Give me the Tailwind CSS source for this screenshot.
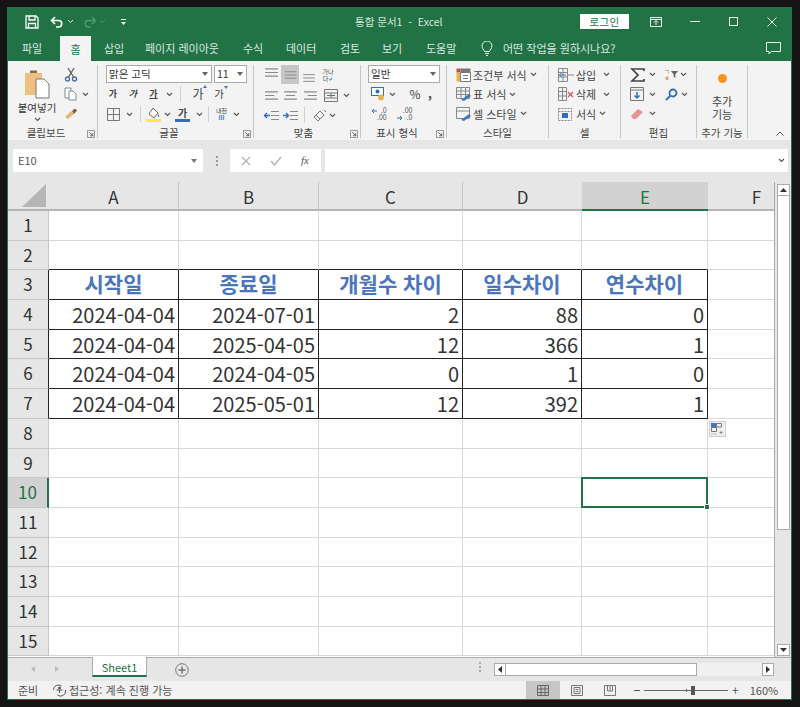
<!DOCTYPE html>
<html lang="ko">
<head>
<meta charset="UTF-8">
<title>통합 문서1 - Excel</title>
<script src="https://cdn.jsdelivr.net/npm/@tailwindcss/browser@4"></script>
</head>
<body class="w-[800px] h-[707px] overflow-hidden bg-[#141414] pt-[7px] pl-[7px] font-['Noto_Sans_CJK_KR','Liberation_Sans',sans-serif] text-[#444]">
<svg class="hidden">
  <symbol id="chev" viewBox="0 0 7 5"><path d="M1 1l2.5 2.5L6 1" stroke="#555" stroke-width="1.1" fill="none"/></symbol>
  <symbol id="launch" viewBox="0 0 9 9"><path d="M.5 8.5v-8h8v8z" fill="none" stroke="#888"/><path d="M2.5 2.5l4 4M6.5 3.5v3h-3" fill="none" stroke="#555"/></symbol>
  <symbol id="lines" viewBox="0 0 16 12"><path d="M1 2h14M1 6h14M1 10h14" stroke="#8a8a8a" stroke-width="1.2"/></symbol>
  <symbol id="left" viewBox="0 0 16 12"><path d="M1 2h14M1 6h10M1 10h14" stroke="#8a8a8a" stroke-width="1.2"/></symbol>
  <symbol id="center" viewBox="0 0 16 12"><path d="M1 2h14M3 6h10M1 10h14" stroke="#8a8a8a" stroke-width="1.2"/></symbol>
  <symbol id="right" viewBox="0 0 16 12"><path d="M1 2h14M5 6h10M1 10h14" stroke="#8a8a8a" stroke-width="1.2"/></symbol>
</svg>
<div class="w-[785px] h-[693px] flex flex-col bg-[#e6e6e6] border border-t-0 border-[#217346]">

  <!-- title bar -->
  <div class="h-[29px] bg-[#217346] flex items-center text-[#d5e6dc] shrink-0">
    <svg class="w-[14px] h-[14px] ml-[17px]" viewBox="0 0 14 14" fill="none" stroke="#fff" stroke-width="1.3"><path d="M1 1h10l2 2v10H1z"/><path d="M4 1v4h6V1M3.5 13V8.5h7V13"/></svg>
    <svg class="w-[14px] h-[12px] ml-[11px]" viewBox="0 0 14 12" fill="none" stroke="#fff" stroke-width="1.6"><path d="M5 1L1.5 4.5 5 8M2 4.5h6.5a3.2 3.2 0 0 1 0 6.5H6"/></svg>
    <svg class="w-[7px] h-[5px] ml-[3px]" viewBox="0 0 7 5"><path d="M1 1l2.5 2.5L6 1" stroke="#e8f1ec" fill="none"/></svg>
    <svg class="w-[14px] h-[12px] ml-[9px]" viewBox="0 0 14 12" fill="none" stroke="#4f9a70" stroke-width="1.5"><path d="M9 1l3.5 3.5L9 8M12 4.5H5.5a3.2 3.2 0 0 0 0 6.5H8"/></svg>
    <svg class="w-[7px] h-[5px] ml-[2px]" viewBox="0 0 7 5"><path d="M1 1l2.5 2.5L6 1" stroke="#4f9a70" fill="none"/></svg>
    <svg class="w-[7px] h-[8px] ml-[14px]" viewBox="0 0 7 8" fill="#e8f1ec"><path d="M1 1h5v1H1zM1 4h5L3.500 7z"/></svg>
    <span class="ml-[228px] text-[10.500px] w-[92px] whitespace-pre">통합 문서1  -  Excel</span>
    <span class="ml-[133px] w-[49px] h-[15px] bg-white text-[#217346] text-[10.5px] leading-[15px] text-center tracking-wide">로그인</span>
    <svg class="w-[12px] h-[10px] ml-[21px]" viewBox="0 0 12 10" fill="none" stroke="#e8f1ec"><path d="M.5.5h11v9H.5zM.5 2.500h11M6 8V4M4 5.500l2-2 2 2"/></svg>
    <span class="w-[10px] h-px bg-[#e8f1ec] ml-[28px]"></span>
    <span class="w-[9px] h-[9px] border border-[#e8f1ec] ml-[29px]"></span>
    <svg class="w-[10px] h-[10px] ml-[29px]" viewBox="0 0 10 10" stroke="#e8f1ec" fill="none"><path d="M.5.5l9 9M9.500.5l-9 9"/></svg>
  </div>

  <!-- ribbon tabs -->
  <div class="h-[25px] bg-[#217346] flex items-center text-[11px] text-[#dbe9e1] shrink-0">
    <span class="ml-[14px] w-[38px]">파일</span>
    <span class="w-[31px] h-[25px] bg-[#f3f3f3] text-[#217346] text-center leading-[26px]">홈</span>
    <span class="ml-[13px] w-[42px]">삽입</span>
    <span class="w-[98px] -ml-px">페이지 레이아웃</span>
    <span class="w-[43px]">수식</span>
    <span class="w-[54px]">데이터</span>
    <span class="w-[42px]">검토</span>
    <span class="w-[44px]">보기</span>
    <span class="w-[55px]">도움말</span>
    <svg class="w-[12px] h-[15px]" viewBox="0 0 12 15" fill="none" stroke="#e8f1ec"><path d="M3.500 10.500C3 8.500 1 7.500 1 5a5 5 0 0 1 10 0c0 2.500-2 3.500-2.500 5.500zM4 12.500h4M5 14.500h2"/></svg>
    <span class="ml-[10px] w-[263px]">어떤 작업을 원하시나요?</span>
    <svg class="w-[15px] h-[13px]" viewBox="0 0 15 13" fill="none" stroke="#e8f1ec"><path d="M.5.5h14v9H5L3 12V9.500H.5z"/></svg>
  </div>

  <!-- ribbon -->
  <div class="h-[79px] bg-[#f3f3f3] flex pt-[4px] relative text-[10.500px] shrink-0">
    <!-- clipboard -->
    <div class="w-[90px] h-[73px] border-r border-[#c8c8c8] relative flex flex-col">
      <div class="flex">
        <div class="w-[56px] flex flex-col items-center pl-[2px]">
          <svg class="w-[26px] h-[30px] mt-[4px]" viewBox="0 0 26 30"><rect x="1" y="4" width="17" height="22" fill="#eec07f"/><path d="M6 4h7V1.500H6z" fill="#8a6b4a"/><path d="M12 10h8l5 5v14H12z" fill="#fff" stroke="#777"/></svg>
          <span class="text-[10.500px] leading-[13px] text-[#333] mt-[2px] whitespace-nowrap">붙여넣기</span>
          <svg class="w-[7px] h-[5px] mt-[3px]"><use href="#chev"/></svg>
        </div>
        <div class="flex flex-col items-start">
          <div class="h-[19.500px] flex items-center"><svg class="w-[14px] h-[15px]" viewBox="0 0 14 15" fill="none" stroke="#4a6fa5" stroke-width="1.4"><circle cx="3.500" cy="12" r="2"/><circle cx="10.500" cy="12" r="2"/><path d="M4.500 10L10 1M9.500 10L4 1" stroke="#666"/></svg></div>
          <div class="h-[19.500px] flex items-center"><svg class="w-[14px] h-[14px]" viewBox="0 0 14 14" fill="#fff" stroke="#7a8a9a"><path d="M1 1h6v10H1z"/><path d="M5 4h4l3 3v6H5z"/></svg><svg class="w-[7px] h-[5px] ml-[4px]"><use href="#chev"/></svg></div>
          <div class="h-[19.500px] flex items-center"><svg class="w-[14px] h-[12px]" viewBox="0 0 14 12"><path d="M1 9l6-6 3 3-6 5z" fill="#e2b878"/><path d="M8 3l3-2.500 2 2L10 6z" fill="#7a5b3a"/></svg></div>
        </div>
      </div>
      <div class="mt-auto h-[10px] leading-[10px] text-center pr-[13px]">클립보드</div>
      <svg class="absolute right-[2px] bottom-0 w-[8px] h-[8px]"><use href="#launch"/></svg>
    </div>

    <!-- font -->
    <div class="w-[156px] h-[73px] border-r border-[#c8c8c8] relative flex flex-col">
      <div class="flex pl-[8px] gap-[2px] h-[18px]">
        <div class="w-[106px] bg-white border border-[#ababab] flex items-center justify-between px-[2px] text-[10.500px] text-[#333]">맑은 고딕<svg class="w-[6px] h-[4px] mr-[1px]" viewBox="0 0 6 4"><path d="M0 0h6L3 4z" fill="#666"/></svg></div>
        <div class="w-[33px] bg-white border border-[#ababab] flex items-center justify-between px-[2px] text-[10.500px] text-[#333]">11<svg class="w-[6px] h-[4px] mr-[1px]" viewBox="0 0 6 4"><path d="M0 0h6L3 4z" fill="#666"/></svg></div>
      </div>
      <div class="flex items-center h-[20px] mt-[1px] pl-[5px] text-[9px] font-bold text-[#444]">
        <span class="w-[20px] text-center">가</span><span class="w-[20px] text-center italic">가</span><span class="w-[21px] text-center underline">가</span>
        <svg class="w-[7px] h-[5px] ml-[2px]"><use href="#chev"/></svg>
        <span class="w-px h-[16px] bg-[#d0d0d0] ml-[7px]"></span>
        <span class="ml-[7px] w-[20px] text-center text-[12px] font-normal relative">가<i class="absolute top-0 right-[1px] w-0 h-0 border-x-[2px] border-b-[3px] border-x-transparent border-b-[#3d78c4]"></i></span>
        <span class="ml-[1px] w-[20px] text-center text-[10.500px] font-normal relative">가<i class="absolute top-0 right-[1px] w-0 h-0 border-x-[2px] border-t-[3px] border-x-transparent border-t-[#3d78c4]"></i></span>
      </div>
      <div class="flex items-center h-[20px] pl-[9px]">
        <svg class="w-[13px] h-[13px]" viewBox="0 0 13 13" fill="none" stroke="#777"><path d="M.5.5h12v12H.5zM6.500.5v12M.5 6.500h12"/></svg>
        <svg class="w-[7px] h-[5px] ml-[6px]"><use href="#chev"/></svg>
        <span class="w-px h-[16px] bg-[#d0d0d0] ml-[7px]"></span>
        <svg class="w-[15px] h-[15px] ml-[5px]" viewBox="0 0 15 15"><path d="M7 1l5 5-4 5-5-4z" fill="#fff" stroke="#666"/><path d="M12 7c1 1 1.500 2 1 3-1 0-1.500-1.500-1-3z" fill="#3d78c4"/><rect x="0" y="12" width="15" height="3" fill="#ffeb3b"/></svg>
        <svg class="w-[7px] h-[5px] ml-[3px]"><use href="#chev"/></svg>
        <div class="ml-[4px] w-[15px] h-[15px] flex flex-col items-center"><span class="text-[10px] leading-[12px] font-bold">가</span><span class="w-[15px] h-[3px] bg-[#3d6cb5]"></span></div>
        <svg class="w-[7px] h-[5px] ml-[6px]"><use href="#chev"/></svg>
        <span class="w-px h-[16px] bg-[#d0d0d0] ml-[5px]"></span>
        <div class="ml-[6px] w-[13px] flex flex-col items-center text-[6px] leading-[7px] text-[#444]"><span class="whitespace-nowrap">내천</span><span class="text-[#3d78c4] font-bold">Ⅲ</span></div>
        <svg class="w-[7px] h-[5px] ml-[5px]"><use href="#chev"/></svg>
      </div>
      <div class="mt-auto h-[10px] leading-[10px] text-center pr-[13px]">글꼴</div>
      <svg class="absolute right-[2px] bottom-0 w-[8px] h-[8px]"><use href="#launch"/></svg>
    </div>

    <!-- alignment -->
    <div class="w-[107px] h-[73px] border-r border-[#c8c8c8] relative flex flex-col">
      <div class="flex items-center h-[19px] pl-[10px]">
        <svg class="w-[15px] h-[11px] mb-[5px]"><use href="#lines"/></svg>
        <span class="ml-[2px] w-[18px] h-[19px] bg-[#c6c6c6] flex items-center justify-center"><svg class="w-[13px] h-[10px]"><use href="#lines"/></svg></span>
        <svg class="w-[14px] h-[10px] ml-[3px] mt-[6px]"><use href="#lines"/></svg>
        <div class="ml-[6px] w-[12px] text-[6px] leading-[7px] text-center"><span class="whitespace-nowrap">가나</span><br><span class="whitespace-nowrap">다<i class="not-italic text-[#3d78c4]">↲</i></span></div>
      </div>
      <div class="flex items-center h-[20px] pl-[10px] mt-px">
        <svg class="w-[15px] h-[11px]"><use href="#left"/></svg>
        <svg class="w-[15px] h-[11px] ml-[4px]"><use href="#center"/></svg>
        <svg class="w-[15px] h-[11px] ml-[5px]"><use href="#right"/></svg>
        <svg class="w-[14px] h-[13px] ml-[6px]" viewBox="0 0 14 13" fill="none" stroke="#777"><path d="M.5.5h13v12H.5zM.5 4h13M.5 9h13M7 4v2M7 7v2"/><path d="M3 6.500h8" stroke="#3d78c4"/></svg>
        <svg class="w-[7px] h-[5px] ml-[5px]"><use href="#chev"/></svg>
      </div>
      <div class="flex items-center h-[20px] pl-[10px]">
        <svg class="w-[15px] h-[11px]" viewBox="0 0 15 11" fill="none"><path d="M7 1.500h8M7 5.500h8M7 9.500h8" stroke="#8a8a8a"/><path d="M6 5.500H1M3 3L.5 5.500 3 8" stroke="#2f6fc0" stroke-width="1.300"/></svg>
        <svg class="w-[15px] h-[11px] ml-[4px]" viewBox="0 0 15 11" fill="none"><path d="M7 1.500h8M7 5.500h8M7 9.500h8" stroke="#8a8a8a"/><path d="M0 5.500h5M3 3l2.500 2.500L3 8" stroke="#2f6fc0" stroke-width="1.300"/></svg>
        <span class="w-px h-[16px] bg-[#d0d0d0] ml-[6px]"></span>
        <svg class="w-[15px] h-[14px] ml-[7px]" viewBox="0 0 15 14" fill="none" stroke="#777"><path d="M2 9l6-6 4 4-6 6zM4 7l4 4"/><path d="M12 2l2 2" stroke="#3d78c4"/></svg>
        <svg class="w-[7px] h-[5px] ml-[2px]"><use href="#chev"/></svg>
      </div>
      <div class="mt-auto h-[10px] leading-[10px] text-center pr-[7px]">맞춤</div>
      <svg class="absolute right-[2px] bottom-0 w-[8px] h-[8px]"><use href="#launch"/></svg>
    </div>

    <!-- number -->
    <div class="w-[86px] h-[73px] border-r border-[#c8c8c8] relative flex flex-col">
      <div class="ml-[7px] w-[72px] h-[18px] bg-white border border-[#ababab] flex items-center justify-between px-[2px] text-[10.500px] text-[#333]">일반<svg class="w-[6px] h-[4px] mr-[1px]" viewBox="0 0 6 4"><path d="M0 0h6L3 4z" fill="#666"/></svg></div>
      <div class="flex items-center h-[20px] mt-[1px] pl-[10px]">
        <svg class="w-[15px] h-[14px]" viewBox="0 0 15 14"><rect x=".5" y=".5" width="12" height="8" fill="#fff" stroke="#2f6fc0"/><circle cx="6.500" cy="4.500" r="2" fill="#2f6fc0"/><circle cx="10" cy="10.500" r="3" fill="#e9b44c"/></svg>
        <svg class="w-[7px] h-[5px] ml-[3px]"><use href="#chev"/></svg>
        <span class="ml-[9px] text-[12px] leading-none w-[20px] text-center">%</span>
        <span class="ml-[3px] text-[12px] font-bold leading-none mb-[3px]">,</span>
      </div>
      <div class="flex items-center h-[20px] pl-[10px] text-[7px] leading-[7px] text-[#555]">
        <svg class="w-[6px] h-[14px]" viewBox="0 0 6 14" fill="none" stroke="#2f6fc0"><path d="M6 4H1M3 2L1 4l2 2"/></svg>
        <span class="text-right">.0<br>.00</span>
        <svg class="w-[6px] h-[14px] ml-[10px]" viewBox="0 0 6 14" fill="none" stroke="#2f6fc0"><path d="M0 11h5M3 9l2 2-2 2"/></svg>
        <span class="text-right">.00<br>.0</span>
      </div>
      <div class="mt-auto h-[10px] leading-[10px] text-center pr-[13px]">표시 형식</div>
      <svg class="absolute right-[2px] bottom-0 w-[8px] h-[8px]"><use href="#launch"/></svg>
    </div>

    <!-- styles -->
    <div class="w-[102px] h-[73px] border-r border-[#c8c8c8] relative flex flex-col">
      <div class="flex items-center h-[19.500px] pl-[9px]">
        <svg class="w-[15px] h-[14px]" viewBox="0 0 15 14" fill="none"><rect x=".5" y=".5" width="4" height="4" fill="#c0504d"/><rect x="4.500" y=".5" width="10" height="4" fill="#777"/><rect x=".5" y="4.500" width="4" height="9" fill="#e9b44c"/><path d="M4.500 4.500h10v9h-10z" stroke="#777" fill="#fff"/><path d="M7 7.500h5M7 10.500h5" stroke="#777"/></svg>
        <span class="ml-[2px] text-[11px] whitespace-nowrap">조건부 서식</span><svg class="w-[7px] h-[5px] ml-[3px]"><use href="#chev"/></svg>
      </div>
      <div class="flex items-center h-[19.500px] pl-[9px]">
        <svg class="w-[15px] h-[14px]" viewBox="0 0 15 14" fill="none" stroke="#888"><path d="M.5.5h13v11H.5zM.5 4h13M.5 7.500h13M5 .5v11M9.500.5v11"/><path d="M5 13l8-6 2 2-7 5z" fill="#3d78c4" stroke="none"/></svg>
        <span class="ml-[2px] text-[11px] whitespace-nowrap">표 서식</span><svg class="w-[7px] h-[5px] ml-[3px]"><use href="#chev"/></svg>
      </div>
      <div class="flex items-center h-[19.500px] pl-[9px]">
        <svg class="w-[15px] h-[14px]" viewBox="0 0 15 14" fill="none" stroke="#888"><path d="M.5.5h13v11H.5zM.5 4h13"/><path d="M5 13l8-6 2 2-7 5z" fill="#3d78c4" stroke="none"/></svg>
        <span class="ml-[2px] text-[11px] whitespace-nowrap">셀 스타일</span><svg class="w-[7px] h-[5px] ml-[3px]"><use href="#chev"/></svg>
      </div>
      <div class="mt-auto h-[10px] leading-[10px] text-center">스타일</div>
    </div>

    <!-- cells -->
    <div class="w-[72px] h-[73px] border-r border-[#c8c8c8] flex flex-col">
      <div class="flex items-center h-[19.500px] pl-[9px]">
        <svg class="w-[16px] h-[14px]" viewBox="0 0 16 14" fill="none" stroke="#888"><path d="M.5.5h9v13h-9zM.5 4.500h9M.5 9h9M5 .5v13"/><path d="M8 7H1.500M3.500 5L1.500 7l2 2" stroke="#2f6fc0"/><path d="M10 7h6" stroke="#888"/></svg>
        <span class="ml-[2px] text-[11px]">삽입</span><svg class="w-[7px] h-[5px] ml-[7px]"><use href="#chev"/></svg>
      </div>
      <div class="flex items-center h-[19.500px] pl-[9px]">
        <svg class="w-[16px] h-[14px]" viewBox="0 0 16 14" fill="none" stroke="#888"><path d="M.5.5h8v13h-8zM.5 4.500h8M.5 9h8M4.500.5v13"/><path d="M10 5l5 5M15 5l-5 5" stroke="#d9534f" stroke-width="1.300"/></svg>
        <span class="ml-[2px] text-[11px]">삭제</span><svg class="w-[7px] h-[5px] ml-[7px]"><use href="#chev"/></svg>
      </div>
      <div class="flex items-center h-[19.500px] pl-[9px]">
        <svg class="w-[16px] h-[14px]" viewBox="0 0 16 14" fill="none" stroke="#888" stroke-dasharray="2 1"><path d="M.5 1.500h13v12H.5zM.5 4.500h13"/><rect x="4" y="6" width="6" height="5" fill="#2f6fc0" stroke="none"/></svg>
        <span class="ml-[2px] text-[11px]">서식</span><svg class="w-[7px] h-[5px] ml-[3px]"><use href="#chev"/></svg>
      </div>
      <div class="mt-auto h-[10px] leading-[10px] text-center">셀</div>
    </div>

    <!-- editing -->
    <div class="w-[76px] h-[73px] border-r border-[#c8c8c8] flex flex-col">
      <div class="flex items-center h-[19.500px] pl-[9px]">
        <svg class="w-[15px] h-[14px]" viewBox="0 0 15 14" fill="none" stroke="#444" stroke-width="1.700"><path d="M14 3V1H2l6 6-6 6h12v-2"/></svg>
        <svg class="w-[7px] h-[5px] ml-[4px]"><use href="#chev"/></svg>
        <span class="ml-[8px] text-[6px] leading-[6px] w-[6px] text-[#c8703a] text-center">ㄱ<br>ㅎ</span><svg class="w-[7px] h-[7px] ml-px" viewBox="0 0 7 7"><path d="M0 0h7L4.300 3.500V7L2.700 6V3.500z" fill="#666"/></svg>
        <svg class="w-[7px] h-[5px] ml-[2px]"><use href="#chev"/></svg>
      </div>
      <div class="flex items-center h-[19.500px] pl-[9px]">
        <svg class="w-[14px] h-[14px]" viewBox="0 0 14 14" fill="none"><path d="M.5.5h13v13H.5z" stroke="#777"/><path d="M.5 3h13" stroke="#777"/><path d="M7 5v6M4.500 8.500L7 11l2.500-2.500" stroke="#2f6fc0" stroke-width="1.500"/></svg>
        <svg class="w-[7px] h-[5px] ml-[5px]"><use href="#chev"/></svg>
        <svg class="w-[13px] h-[13px] ml-[9px]" viewBox="0 0 13 13" fill="none" stroke="#2f6fc0" stroke-width="1.800"><circle cx="8" cy="5" r="3.500"/><path d="M5.500 7.500L1 12"/></svg>
        <svg class="w-[7px] h-[5px] ml-[3px]"><use href="#chev"/></svg>
      </div>
      <div class="flex items-center h-[19.500px] pl-[9px]">
        <svg class="w-[15px] h-[12px]" viewBox="0 0 15 12"><path d="M1 8l7-7 5 3-7 7H3z" fill="#e8919b"/></svg>
        <svg class="w-[7px] h-[5px] ml-[4px]"><use href="#chev"/></svg>
      </div>
      <div class="mt-auto h-[10px] leading-[10px] text-center">편집</div>
    </div>

    <!-- add-ins -->
    <div class="w-[51px] h-[73px] border-r border-[#c8c8c8] flex flex-col items-center">
      <span class="w-[9px] h-[9px] rounded-full bg-[#f7941d] mt-[9px]"></span>
      <span class="text-[11px] leading-[13px] text-center mt-[12px]">추가<br>기능</span>
      <div class="mt-auto h-[10px] leading-[10px] text-center whitespace-nowrap">추가 기능</div>
    </div>
    <svg class="absolute right-[7px] bottom-[4px] w-[8px] h-[5px]" viewBox="0 0 8 5"><path d="M.5 4.500L4 1l3.500 3.500" stroke="#555" fill="none"/></svg>
  </div>

  <!-- formula bar -->
  <div class="h-[42px] flex items-center shrink-0 pb-[1px] text-[11px]">
    <div class="ml-[5px] w-[190px] h-[23px] bg-white flex items-center justify-between px-[5px] text-[#555]">E10<svg class="w-[6px] h-[4px] mr-[1px]" viewBox="0 0 6 4"><path d="M0 0h6L3 4z" fill="#777"/></svg></div>
    <div class="w-[27px] flex flex-col items-center gap-[2px]"><span class="w-[2px] h-[2px] bg-[#999]"></span><span class="w-[2px] h-[2px] bg-[#999]"></span><span class="w-[2px] h-[2px] bg-[#999]"></span></div>
    <div class="w-[91px] h-[23px] bg-white flex items-center pl-[11px]">
      <svg class="w-[10px] h-[10px]" viewBox="0 0 10 10" stroke="#b5b5b5" stroke-width="1.300" fill="none"><path d="M1 1l8 8M9 1l-8 8"/></svg>
      <svg class="w-[12px] h-[10px] ml-[19px]" viewBox="0 0 12 10" stroke="#b5b5b5" stroke-width="1.500" fill="none"><path d="M1 5l3.500 4L11 1"/></svg>
      <span class="ml-[19px] font-['Liberation_Serif',serif] italic text-[11px] text-[#555] whitespace-nowrap">fx</span>
    </div>
    <div class="ml-[4px] w-[463px] h-[23px] bg-white flex items-center justify-end pr-[3px]"><svg class="w-[7px] h-[5px]"><use href="#chev"/></svg></div>
  </div>

  <!-- sheet and vertical scrollbar -->
  <div class="h-[475px] flex shrink-0">
    <div class="w-[767px] h-[475px] overflow-hidden bg-white grid grid-cols-[41px_130px_140px_144px_119px_126px_67px] grid-rows-[29px_repeat(15,29.7px)] text-[20px] text-[#333] border-r border-[#ababab]">
      <!-- column headers -->
      <div class="bg-[#e6e6e6] border-b-2 border-[#b5b5b5] flex items-end justify-end p-[2px] pr-[3px]"><svg class="w-[24px] h-[23px]" viewBox="0 0 24 23"><path d="M24 0v23H0z" fill="#b6b6b6"/></svg></div>
      <div class="bg-[#e6e6e6] border-b-2 border-r border-b-[#b5b5b5] border-r-[#c6c6c6] text-center text-[17px] leading-[29px]">A</div>
      <div class="bg-[#e6e6e6] border-b-2 border-r border-b-[#b5b5b5] border-r-[#c6c6c6] text-center text-[17px] leading-[29px]">B</div>
      <div class="bg-[#e6e6e6] border-b-2 border-r border-b-[#b5b5b5] border-r-[#c6c6c6] text-center text-[17px] leading-[29px]">C</div>
      <div class="bg-[#e6e6e6] border-b-2 border-b-[#b5b5b5] text-center text-[17px] leading-[29px]">D</div>
      <div class="bg-[#d2d2d2] border-b-2 border-[#217346] text-[#217346] text-center text-[17px] leading-[29px]">E</div>
      <div class="bg-[#e6e6e6] border-b-2 border-b-[#b5b5b5] text-center text-[17px] leading-[29px] pl-[30px]">F</div>

      <!-- row 1 -->
      <div class="bg-[#e6e6e6] border-r border-b border-[#c6c6c6] text-center text-[17px] leading-[28px]">1</div>
      <div class="border-r border-b border-[#d9d9d9]"></div><div class="border-r border-b border-[#d9d9d9]"></div><div class="border-r border-b border-[#d9d9d9]"></div><div class="border-r border-b border-[#d9d9d9]"></div><div class="border-r border-b border-[#d9d9d9]"></div><div class="border-b border-[#d9d9d9]"></div>
      <!-- row 2 -->
      <div class="bg-[#e6e6e6] border-r border-b border-[#c6c6c6] text-center text-[17px] leading-[28px]">2</div>
      <div class="border-r border-b border-r-[#d9d9d9] border-b-[#222]"></div><div class="border-r border-b border-r-[#d9d9d9] border-b-[#222]"></div><div class="border-r border-b border-r-[#d9d9d9] border-b-[#222]"></div><div class="border-r border-b border-r-[#d9d9d9] border-b-[#222]"></div><div class="border-r border-b border-r-[#d9d9d9] border-b-[#222]"></div><div class="border-b border-[#d9d9d9]"></div>
      <!-- row 3 -->
      <div class="bg-[#e6e6e6] border-r border-b border-r-[#222] border-b-[#c6c6c6] text-center text-[17px] leading-[28px]">3</div>
      <div class="border-r border-b border-[#222] text-center text-[21px] leading-[27px] font-bold text-[#4a76bd]">시작일</div>
      <div class="border-r border-b border-[#222] text-center text-[21px] leading-[27px] font-bold text-[#4a76bd]">종료일</div>
      <div class="border-r border-b border-[#222] text-center text-[21px] leading-[27px] font-bold text-[#4a76bd]">개월수 차이</div>
      <div class="border-r border-b border-[#222] text-center text-[21px] leading-[27px] font-bold text-[#4a76bd]">일수차이</div>
      <div class="border-r border-b border-[#222] text-center text-[21px] leading-[27px] font-bold text-[#4a76bd]">연수차이</div>
      <div class="border-b border-[#d9d9d9]"></div>
      <!-- row 4 -->
      <div class="bg-[#e6e6e6] border-r border-b border-r-[#222] border-b-[#c6c6c6] text-center text-[17px] leading-[28px]">4</div>
      <div class="border-r border-b border-[#222] text-right pr-[3px] leading-[29px]">2024-04-04</div>
      <div class="border-r border-b border-[#222] text-right pr-[3px] leading-[29px]">2024-07-01</div>
      <div class="border-r border-b border-[#222] text-right pr-[3px] leading-[29px]">2</div>
      <div class="border-r border-b border-[#222] text-right pr-[3px] leading-[29px]">88</div>
      <div class="border-r border-b border-[#222] text-right pr-[3px] leading-[29px]">0</div>
      <div class="border-b border-[#d9d9d9]"></div>
      <!-- row 5 -->
      <div class="bg-[#e6e6e6] border-r border-b border-r-[#222] border-b-[#c6c6c6] text-center text-[17px] leading-[28px]">5</div>
      <div class="border-r border-b border-[#222] text-right pr-[3px] leading-[29px]">2024-04-04</div>
      <div class="border-r border-b border-[#222] text-right pr-[3px] leading-[29px]">2025-04-05</div>
      <div class="border-r border-b border-[#222] text-right pr-[3px] leading-[29px]">12</div>
      <div class="border-r border-b border-[#222] text-right pr-[3px] leading-[29px]">366</div>
      <div class="border-r border-b border-[#222] text-right pr-[3px] leading-[29px]">1</div>
      <div class="border-b border-[#d9d9d9]"></div>
      <!-- row 6 -->
      <div class="bg-[#e6e6e6] border-r border-b border-r-[#222] border-b-[#c6c6c6] text-center text-[17px] leading-[28px]">6</div>
      <div class="border-r border-b border-[#222] text-right pr-[3px] leading-[29px]">2024-04-04</div>
      <div class="border-r border-b border-[#222] text-right pr-[3px] leading-[29px]">2024-04-05</div>
      <div class="border-r border-b border-[#222] text-right pr-[3px] leading-[29px]">0</div>
      <div class="border-r border-b border-[#222] text-right pr-[3px] leading-[29px]">1</div>
      <div class="border-r border-b border-[#222] text-right pr-[3px] leading-[29px]">0</div>
      <div class="border-b border-[#d9d9d9]"></div>
      <!-- row 7 -->
      <div class="bg-[#e6e6e6] border-r border-b border-r-[#222] border-b-[#c6c6c6] text-center text-[17px] leading-[28px]">7</div>
      <div class="border-r border-b border-[#222] text-right pr-[3px] leading-[29px]">2024-04-04</div>
      <div class="border-r border-b border-[#222] text-right pr-[3px] leading-[29px]">2025-05-01</div>
      <div class="border-r border-b border-[#222] text-right pr-[3px] leading-[29px]">12</div>
      <div class="border-r border-b border-[#222] text-right pr-[3px] leading-[29px]">392</div>
      <div class="border-r border-b border-[#222] text-right pr-[3px] leading-[29px]">1</div>
      <div class="border-b border-[#d9d9d9]"></div>
      <!-- row 8 -->
      <div class="bg-[#e6e6e6] border-r border-b border-[#c6c6c6] text-center text-[17px] leading-[28px]">8</div>
      <div class="border-r border-b border-[#d9d9d9]"></div><div class="border-r border-b border-[#d9d9d9]"></div><div class="border-r border-b border-[#d9d9d9]"></div><div class="border-r border-b border-[#d9d9d9]"></div><div class="border-r border-b border-[#d9d9d9]"></div>
      <div class="border-b border-[#d9d9d9] relative">
        <span class="absolute top-[2px] left-[1px] w-[17px] h-[16px] bg-[#f0f0f0] border border-[#d0d0d0] flex items-center justify-center"><svg class="w-[13px] h-[12px]" viewBox="0 0 13 12" fill="none"><rect x="0" y="0" width="5" height="4" fill="#4472c4"/><path d="M5.500.5h5v3.500h-5zM.5 4.500h5v4h-5z" stroke="#777"/><path d="M.5 11h5" stroke="#999" stroke-dasharray="1 1"/><path d="M10 8v3M8.500 9.500h3" stroke="#888"/></svg></span>
      </div>
      <!-- row 9 -->
      <div class="bg-[#e6e6e6] border-r border-b border-[#c6c6c6] text-center text-[17px] leading-[28px]">9</div>
      <div class="border-r border-b border-[#d9d9d9]"></div><div class="border-r border-b border-[#d9d9d9]"></div><div class="border-r border-b border-[#d9d9d9]"></div><div class="border-r border-b border-[#d9d9d9]"></div><div class="border-r border-b border-[#d9d9d9]"></div><div class="border-b border-[#d9d9d9]"></div>
      <!-- row 10, E10 is the active cell -->
      <div class="bg-[#d2d2d2] border-r-2 border-b border-r-[#217346] border-b-[#c6c6c6] text-[#217346] text-center text-[17px] leading-[28px]">10</div>
      <div class="border-r border-b border-[#d9d9d9]"></div><div class="border-r border-b border-[#d9d9d9]"></div><div class="border-r border-b border-[#d9d9d9]"></div><div class="border-r border-b border-[#d9d9d9]"></div>
      <div class="border-r border-b border-[#d9d9d9] relative">
        <span class="absolute -left-px -top-px w-[127px] h-[31px] border-2 border-[#217346]"></span>
        <span class="absolute -right-[3px] -bottom-[3px] w-[6px] h-[6px] bg-[#217346] border border-white"></span>
      </div>
      <div class="border-b border-[#d9d9d9]"></div>
      <!-- row 11 -->
      <div class="bg-[#e6e6e6] border-r border-b border-[#c6c6c6] text-center text-[17px] leading-[28px]">11</div>
      <div class="border-r border-b border-[#d9d9d9]"></div><div class="border-r border-b border-[#d9d9d9]"></div><div class="border-r border-b border-[#d9d9d9]"></div><div class="border-r border-b border-[#d9d9d9]"></div><div class="border-r border-b border-[#d9d9d9]"></div><div class="border-b border-[#d9d9d9]"></div>
      <!-- row 12 -->
      <div class="bg-[#e6e6e6] border-r border-b border-[#c6c6c6] text-center text-[17px] leading-[28px]">12</div>
      <div class="border-r border-b border-[#d9d9d9]"></div><div class="border-r border-b border-[#d9d9d9]"></div><div class="border-r border-b border-[#d9d9d9]"></div><div class="border-r border-b border-[#d9d9d9]"></div><div class="border-r border-b border-[#d9d9d9]"></div><div class="border-b border-[#d9d9d9]"></div>
      <!-- row 13 -->
      <div class="bg-[#e6e6e6] border-r border-b border-[#c6c6c6] text-center text-[17px] leading-[28px]">13</div>
      <div class="border-r border-b border-[#d9d9d9]"></div><div class="border-r border-b border-[#d9d9d9]"></div><div class="border-r border-b border-[#d9d9d9]"></div><div class="border-r border-b border-[#d9d9d9]"></div><div class="border-r border-b border-[#d9d9d9]"></div><div class="border-b border-[#d9d9d9]"></div>
      <!-- row 14 -->
      <div class="bg-[#e6e6e6] border-r border-b border-[#c6c6c6] text-center text-[17px] leading-[28px]">14</div>
      <div class="border-r border-b border-[#d9d9d9]"></div><div class="border-r border-b border-[#d9d9d9]"></div><div class="border-r border-b border-[#d9d9d9]"></div><div class="border-r border-b border-[#d9d9d9]"></div><div class="border-r border-b border-[#d9d9d9]"></div><div class="border-b border-[#d9d9d9]"></div>
      <!-- row 15 -->
      <div class="bg-[#e6e6e6] border-r border-b border-[#c6c6c6] text-center text-[17px] leading-[28px]">15</div>
      <div class="border-r border-b border-[#d9d9d9]"></div><div class="border-r border-b border-[#d9d9d9]"></div><div class="border-r border-b border-[#d9d9d9]"></div><div class="border-r border-b border-[#d9d9d9]"></div><div class="border-r border-b border-[#d9d9d9]"></div><div class="border-b border-[#d9d9d9]"></div>
    </div>
    <!-- vertical scrollbar -->
    <div class="w-[13px] ml-[1.500px] pt-[2px] pb-px flex flex-col">
      <div class="h-[12px] bg-white border border-[#ababab] flex items-center justify-center"><svg class="w-[7px] h-[4px]" viewBox="0 0 7 4"><path d="M3.500 0L7 4H0z" fill="#333"/></svg></div>
      <div class="h-[334px] bg-white border-x border-b border-[#ababab]"></div>
      <div class="flex-1"></div>
      <div class="h-[12px] bg-white border border-[#ababab] flex items-center justify-center"><svg class="w-[7px] h-[4px]" viewBox="0 0 7 4"><path d="M0 0h7L3.500 4z" fill="#333"/></svg></div>
    </div>
  </div>

  <!-- sheet tabs and horizontal scrollbar -->
  <div class="h-[24px] flex items-start border-t border-[#ababab] shrink-0 text-[11px]">
    <svg class="w-[4px] h-[6px] ml-[23px] mt-[8px]" viewBox="0 0 4 6"><path d="M4 0v6L0 3z" fill="#bbb"/></svg>
    <svg class="w-[4px] h-[6px] ml-[20px] mt-[8px]" viewBox="0 0 4 6"><path d="M0 0v6l4-3z" fill="#bbb"/></svg>
    <div class="ml-[33px] w-[55px] h-[20px] -mt-px bg-white border-x border-[#ababab] border-b-2 border-b-[#217346] text-[#217346] text-center leading-[20px]">Sheet1</div>
    <svg class="w-[14px] h-[14px] ml-[28px] mt-[5px]" viewBox="0 0 14 14" fill="none" stroke="#777"><circle cx="7" cy="7" r="6.300"/><path d="M7 3.500v7M3.500 7h7" stroke-width="1.500"/></svg>
    <div class="ml-[290px] mt-[4px] flex flex-col gap-[2px]"><span class="w-[2px] h-[2px] bg-[#aaa]"></span><span class="w-[2px] h-[2px] bg-[#aaa]"></span><span class="w-[2px] h-[2px] bg-[#aaa]"></span></div>
    <div class="ml-[13px] mt-[5px] w-[280px] h-[13px] bg-[#f0f0f0] flex">
      <div class="w-[12px] h-[13px] bg-white border border-[#ababab] flex items-center justify-center"><svg class="w-[4px] h-[7px]" viewBox="0 0 4 7"><path d="M4 0v7L0 3.500z" fill="#333"/></svg></div>
      <div class="w-[191px] h-[13px] bg-white border-y border-r border-[#ababab]"></div>
      <div class="flex-1"></div>
      <div class="w-[12px] h-[13px] bg-white border border-[#ababab] flex items-center justify-center"><svg class="w-[4px] h-[7px]" viewBox="0 0 4 7"><path d="M0 0v7l4-3.500z" fill="#333"/></svg></div>
    </div>
  </div>

  <!-- status bar -->
  <div class="h-[18px] flex-1 bg-[#f1f1f1] flex items-center text-[11px] text-[#555]">
    <span class="ml-[10px] w-[34px]">준비</span>
    <svg class="w-[15px] h-[13px]" viewBox="0 0 15 13" fill="none" stroke="#555"><path d="M1.500 6a5 5 0 0 1 8-4M13.500 6a5 5 0 0 1-8 5"/><circle cx="7.500" cy="4" r="1" fill="#555"/><path d="M4.500 6h6M7.500 6v3"/></svg>
    <span class="ml-[2px] w-[457px] whitespace-nowrap">접근성: 계속 진행 가능</span>
    <div class="w-[34px] h-[18px] bg-[#c6c6c6] flex items-center justify-center"><svg class="w-[12px] h-[11px]" viewBox="0 0 12 11" fill="none" stroke="#666"><path d="M.5.5h11v10H.5zM4 .5v10M8 .5v10M.5 4h11M.5 7.500h11"/></svg></div>
    <svg class="w-[12px] h-[11px] ml-[11px]" viewBox="0 0 12 11" fill="none" stroke="#777"><path d="M.5.5h11v10H.5zM3 2.500h6v6H3zM4.500 4.500h3M4.500 6.500h3"/></svg>
    <svg class="w-[12px] h-[11px] ml-[21px]" viewBox="0 0 12 11" fill="none" stroke="#777"><path d="M.5.5h11v10H.5zM3.500.5v5.500h5V.5M6 .5v5.500"/></svg>
    <span class="w-[6px] h-px bg-[#555] ml-[18px]"></span>
    <div class="ml-[4px] w-[84px] h-px bg-[#666] relative"><span class="absolute left-[42px] -top-[1px] w-px h-[3px] bg-[#666]"></span><span class="absolute left-[47px] -top-[4px] w-[4px] h-[9px] bg-[#555]"></span></div>
    <span class="ml-[4px] text-[12px] leading-none">+</span>
    <span class="ml-[11px]">160%</span>
  </div>
</div>
</body>
</html>
